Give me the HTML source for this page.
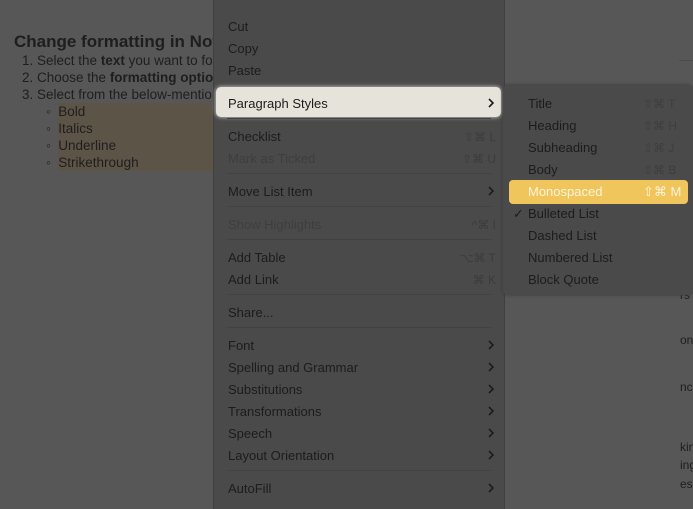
<!DOCTYPE html>
<html><head><style>
body{margin:0;width:693px;height:503px;overflow:hidden;background:#575757;font-family:"Liberation Sans",sans-serif;position:relative}
.a{position:absolute;white-space:nowrap}
.doc{color:#1e1e1e;font-size:13.5px}
.menu{position:absolute;left:213px;top:-6px;width:290px;height:515px;background:#4a4a4a;border-left:1px solid #3f3f3f;border-right:1px solid #3f3f3f}
.it{position:absolute;left:14px;font-size:13px;color:#1c1c1c}
.dis{color:#3e3e3e}
.sc{position:absolute;right:8px;font-size:12px;color:#3c3c3c}
.ar{position:absolute;right:10px;width:6px;height:10px}
.sep{position:absolute;left:13px;right:13px;height:1px;background:#424242}
.sub{position:absolute;left:503px;top:85px;width:190px;height:210px;background:#4a4a4a;border-radius:5px;box-shadow:0 0 3px #3a3a3a}
.si{position:absolute;left:25px;font-size:13px;color:#1c1c1c}
.ss{position:absolute;left:140px;font-size:12px;color:#3e3e3e}
</style></head><body>
<svg width="0" height="0" style="position:absolute"><defs><symbol id="c" viewBox="0 0 6 10"><path d="M1 1 L5 5 L1 9" fill="none" stroke="#1c1c1c" stroke-width="1.6"/></symbol></defs></svg>
<div class="a doc" style="left:14px;top:32px;font-size:17px;font-weight:bold">Change formatting in Notes</div>
<div class="a doc" style="left:22px;top:53px">1. Select the <b>text</b> you want to format</div>
<div class="a doc" style="left:22px;top:70px">2. Choose the <b>formatting options</b></div>
<div class="a doc" style="left:22px;top:87px">3. Select from the below-mentioned</div>
<div class="a" style="left:58px;top:103px;width:160px;height:68px;background:#5d5448"></div>
<div class="a doc" style="left:46px;top:104px">◦ &nbsp;Bold</div>
<div class="a doc" style="left:46px;top:121px">◦ &nbsp;Italics</div>
<div class="a doc" style="left:46px;top:138px">◦ &nbsp;Underline</div>
<div class="a doc" style="left:46px;top:155px">◦ &nbsp;Strikethrough</div>
<div class="a" style="left:679px;top:60px;width:14px;height:1px;background:#4c4c4c"></div>
<div class="a doc" style="left:680px;top:288px;font-size:12px">rs</div>
<div class="a doc" style="left:680px;top:333px;font-size:12px">ons</div>
<div class="a doc" style="left:680px;top:380px;font-size:12px">nce</div>
<div class="a doc" style="left:680px;top:440px;font-size:12px">kin</div>
<div class="a doc" style="left:680px;top:458px;font-size:12px">ing</div>
<div class="a doc" style="left:680px;top:477px;font-size:12px">es</div>
<div class="menu">
<div class="it" style="top:25px">Cut</div>
<div class="it" style="top:47px">Copy</div>
<div class="it" style="top:69px">Paste</div>
<div class="a" style="left:2px;top:93px;width:285px;height:30px;background:#e6e3da;border-radius:5px;box-shadow:0 0 4px #ddd"></div>
<div class="it" style="top:102px">Paragraph Styles</div><svg class="ar" style="top:104px"><use href="#c"/></svg>
<div class="sep" style="top:124px"></div>
<div class="it" style="top:135px">Checklist</div><div class="sc" style="top:136px">⇧⌘ L</div>
<div class="it dis" style="top:157px">Mark as Ticked</div><div class="sc" style="top:158px">⇧⌘ U</div>
<div class="sep" style="top:179px"></div>
<div class="it" style="top:190px">Move List Item</div><svg class="ar" style="top:192px"><use href="#c"/></svg>
<div class="sep" style="top:212px"></div>
<div class="it dis" style="top:223px">Show Highlights</div><div class="sc" style="top:224px">^⌘ I</div>
<div class="sep" style="top:245px"></div>
<div class="it" style="top:256px">Add Table</div><div class="sc" style="top:257px">⌥⌘ T</div>
<div class="it" style="top:278px">Add Link</div><div class="sc" style="top:279px">⌘ K</div>
<div class="sep" style="top:300px"></div>
<div class="it" style="top:311px">Share...</div>
<div class="sep" style="top:333px"></div>
<div class="it" style="top:344px">Font</div><svg class="ar" style="top:346px"><use href="#c"/></svg>
<div class="it" style="top:366px">Spelling and Grammar</div><svg class="ar" style="top:368px"><use href="#c"/></svg>
<div class="it" style="top:388px">Substitutions</div><svg class="ar" style="top:390px"><use href="#c"/></svg>
<div class="it" style="top:410px">Transformations</div><svg class="ar" style="top:412px"><use href="#c"/></svg>
<div class="it" style="top:432px">Speech</div><svg class="ar" style="top:434px"><use href="#c"/></svg>
<div class="it" style="top:454px">Layout Orientation</div><svg class="ar" style="top:456px"><use href="#c"/></svg>
<div class="sep" style="top:476px"></div>
<div class="it" style="top:487px">AutoFill</div><svg class="ar" style="top:489px"><use href="#c"/></svg>
</div>
<div class="sub">
<div class="si" style="top:11px">Title</div><div class="ss" style="top:12px">⇧⌘ T</div>
<div class="si" style="top:33px">Heading</div><div class="ss" style="top:34px">⇧⌘ H</div>
<div class="si" style="top:55px">Subheading</div><div class="ss" style="top:56px">⇧⌘ J</div>
<div class="si" style="top:77px">Body</div><div class="ss" style="top:78px">⇧⌘ B</div>
<div class="a" style="left:6px;top:95px;width:179px;height:24px;background:#f0c65c;border-radius:4px"></div>
<div class="si" style="top:99px;color:#fbf3dc">Monospaced</div><div class="ss" style="top:99px;color:#fbf3dc;font-size:13px">⇧⌘ M</div>
<div class="si" style="top:121px;left:10px">✓</div>
<div class="si" style="top:121px">Bulleted List</div>
<div class="si" style="top:143px">Dashed List</div>
<div class="si" style="top:165px">Numbered List</div>
<div class="si" style="top:187px">Block Quote</div>
</div>
</body></html>
